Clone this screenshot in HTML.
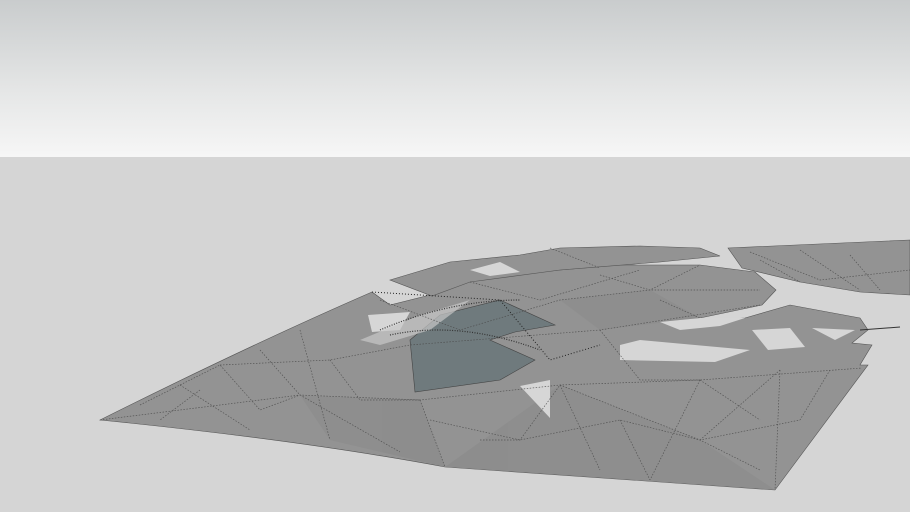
<!DOCTYPE html>
<html><head><meta charset="utf-8"><style>
html,body{margin:0;padding:0;width:910px;height:512px;overflow:hidden;background:#d5d5d5}
.sky{position:absolute;left:0;top:0;width:910px;height:157px;background:linear-gradient(#c9cccd,#e6e7e7 60%,#f6f6f6)}
svg{position:absolute;left:0;top:0}
</style></head><body>
<div class="sky"></div>
<svg width="910" height="512" viewBox="0 0 910 512">
<g fill="#939393" stroke="#555" stroke-width="0.6">
<path d="M100,420 Q250,345 372,292 L390,305 430,295 470,280 560,270 620,265 700,265 755,272 776,290 762,305 700,318 665,322 745,318 790,305 860,318 868,330 852,343 872,345 860,365 868,365 775,490 445,467 Q300,440 100,420 Z"/>
<polygon points="390,280 450,262 520,255 560,248 640,246 700,248 720,256 660,262 560,270 470,282 432,296"/>
<polygon points="728,248 910,240 910,295 860,292 800,282 742,268"/>
</g>
<g fill="#8a8a8a" opacity="0.6">
<polygon points="445,467 560,385 700,440 775,490"/>
<polygon points="300,395 420,400 445,467 330,440"/>
<polygon points="560,300 650,290 700,318 600,330"/>
</g>
<g fill="#d6d6d6">
<polygon points="368,315 410,312 400,330 372,332"/>
<polygon points="620,345 640,340 750,350 715,362 620,360"/>
<polygon points="520,386 550,380 550,418"/>
<polygon points="752,330 790,328 805,347 768,350"/>
<polygon points="812,328 855,330 835,340"/>
<polygon points="470,270 500,262 520,272 490,276"/>
<polygon points="660,322 700,318 745,318 720,326 680,330"/>
</g>
<polygon points="410,340 440,315 500,300 555,325 515,332 490,340 535,360 500,380 415,392" fill="#6f7a7d" stroke="#444" stroke-width="0.6"/>
<polygon points="360,340 420,315 470,300 430,330 380,345" fill="#c8c8c8" opacity="0.7"/>
<g stroke="#4a4a4a" stroke-width="0.7" stroke-dasharray="1.5,1.5" fill="none" opacity="0.85">
<path d="M100,420 L300,395 L420,400 L560,385 L700,380 L862,368"/>
<path d="M220,365 L330,360 L410,345 L600,330 L760,305"/>
<path d="M180,385 L250,430 M300,330 L330,440 M300,395 L400,452 M420,400 L445,467 M560,385 L600,470 M700,380 L650,480 M780,370 L775,490 M560,385 L700,440 L800,420"/>
<path d="M380,300 L460,330 L560,300 L650,290 L760,290"/>
<path d="M470,282 L540,300 L640,270 M550,248 L600,268 M750,252 L820,280 L910,270 M800,250 L860,290"/>
<path d="M430,420 L520,440 L620,420 L700,440 L760,470"/>
<path d="M140,405 L220,365 L260,410 L300,395 M200,390 L160,420 M330,360 L360,400 L420,400 M260,350 L300,395"/>
<path d="M480,440 L520,440 L560,385 M620,420 L650,480 M700,440 L780,370 M830,370 L800,420 M700,380 L760,420"/>
<path d="M600,330 L640,380 L700,380 M660,300 L700,318 M600,275 L650,290 L700,265"/>
<path d="M850,255 L880,290 M760,260 L800,282"/>
</g>
<path d="M372,292 L500,300 L550,360 L600,345" stroke="#222" stroke-width="1" stroke-dasharray="1,2" fill="none"/>
<path d="M380,330 Q450,300 520,300 M390,335 Q460,320 540,350" stroke="#333" stroke-width="1.2" stroke-dasharray="1,1.5" fill="none"/>
<path d="M860,330 L900,327" stroke="#333" stroke-width="1"/>
</svg>
</body></html>
